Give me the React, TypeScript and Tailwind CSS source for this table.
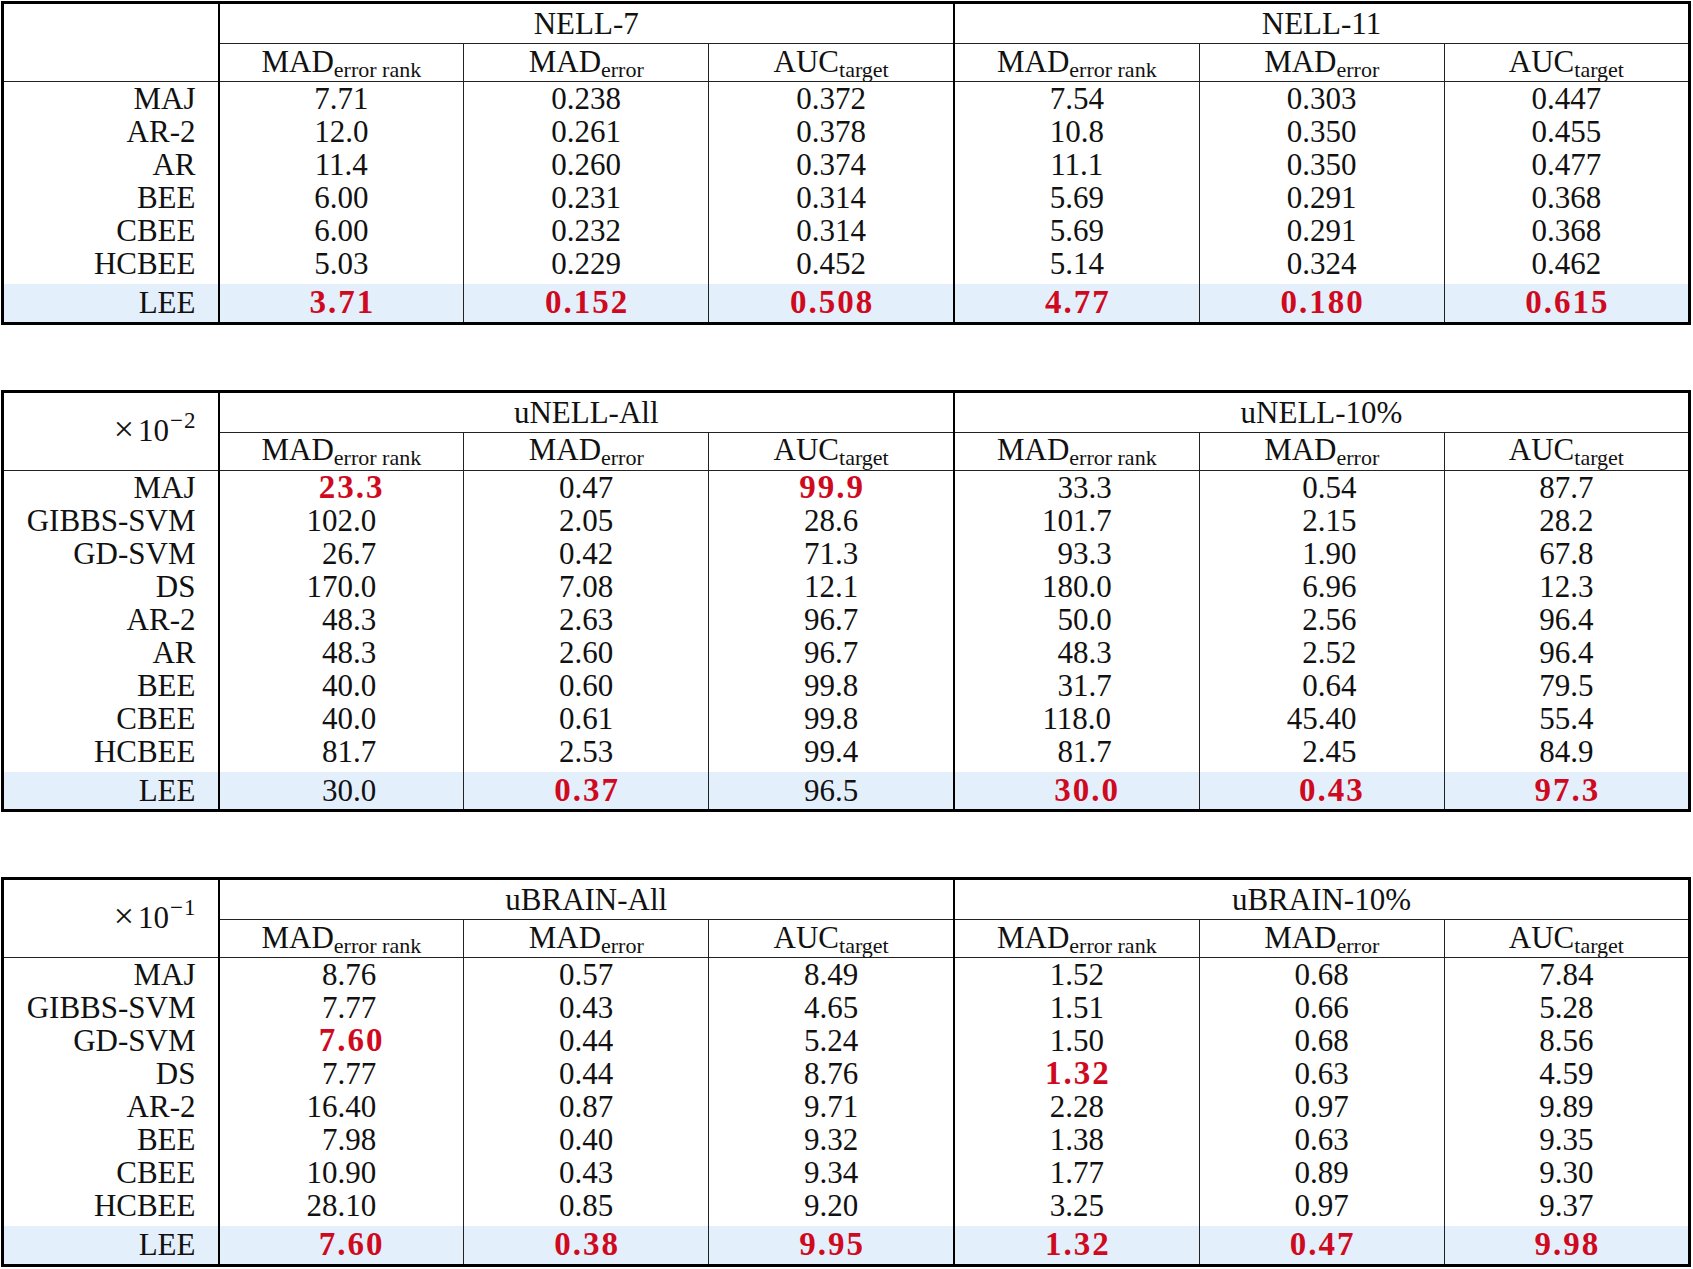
import React from 'react';

interface Block {
  scale?: string;
  groups: [string, string];
  rows: string[][];
}

// "*" marks a best value (bold red)
const blocks: Block[] = [
  {
    groups: ['NELL-7', 'NELL-11'],
    rows: [
      ['MAJ', '7.71', '0.238', '0.372', '7.54', '0.303', '0.447'],
      ['AR-2', '12.0', '0.261', '0.378', '10.8', '0.350', '0.455'],
      ['AR', '11.4', '0.260', '0.374', '11.1', '0.350', '0.477'],
      ['BEE', '6.00', '0.231', '0.314', '5.69', '0.291', '0.368'],
      ['CBEE', '6.00', '0.232', '0.314', '5.69', '0.291', '0.368'],
      ['HCBEE', '5.03', '0.229', '0.452', '5.14', '0.324', '0.462'],
      ['LEE', '*3.71', '*0.152', '*0.508', '*4.77', '*0.180', '*0.615'],
    ],
  },
  {
    scale: '2',
    groups: ['uNELL-All', 'uNELL-10%'],
    rows: [
      ['MAJ', '*23.3', '0.47', '*99.9', '33.3', '0.54', '87.7'],
      ['GIBBS-SVM', '102.0', '2.05', '28.6', '101.7', '2.15', '28.2'],
      ['GD-SVM', '26.7', '0.42', '71.3', '93.3', '1.90', '67.8'],
      ['DS', '170.0', '7.08', '12.1', '180.0', '6.96', '12.3'],
      ['AR-2', '48.3', '2.63', '96.7', '50.0', '2.56', '96.4'],
      ['AR', '48.3', '2.60', '96.7', '48.3', '2.52', '96.4'],
      ['BEE', '40.0', '0.60', '99.8', '31.7', '0.64', '79.5'],
      ['CBEE', '40.0', '0.61', '99.8', '118.0', '45.40', '55.4'],
      ['HCBEE', '81.7', '2.53', '99.4', '81.7', '2.45', '84.9'],
      ['LEE', '30.0', '*0.37', '96.5', '*30.0', '*0.43', '*97.3'],
    ],
  },
  {
    scale: '1',
    groups: ['uBRAIN-All', 'uBRAIN-10%'],
    rows: [
      ['MAJ', '8.76', '0.57', '8.49', '1.52', '0.68', '7.84'],
      ['GIBBS-SVM', '7.77', '0.43', '4.65', '1.51', '0.66', '5.28'],
      ['GD-SVM', '*7.60', '0.44', '5.24', '1.50', '0.68', '8.56'],
      ['DS', '7.77', '0.44', '8.76', '*1.32', '0.63', '4.59'],
      ['AR-2', '16.40', '0.87', '9.71', '2.28', '0.97', '9.89'],
      ['BEE', '7.98', '0.40', '9.32', '1.38', '0.63', '9.35'],
      ['CBEE', '10.90', '0.43', '9.34', '1.77', '0.89', '9.30'],
      ['HCBEE', '28.10', '0.85', '9.20', '3.25', '0.97', '9.37'],
      ['LEE', '*7.60', '*0.38', '*9.95', '*1.32', '*0.47', '*9.98'],
    ],
  },
];

const metrics: [string, string][] = [
  ['MAD', 'error rank'],
  ['MAD', 'error'],
  ['AUC', 'target'],
];

const digits = (s: string) => s.replace('*', '').replace('.', '').length;

function Metric({ base, sub }: { base: string; sub: string }) {
  return (
    <span className="whitespace-nowrap">
      {base}
      <span className="text-[22px] relative top-[5px]">{sub}</span>
    </span>
  );
}

function Value({ raw, width }: { raw: string; width: number }) {
  const bold = raw.startsWith('*');
  const v = raw.replace('*', '');
  // figure spaces keep numbers of a column flush right
  const pad = '\u2007'.repeat(Math.max(0, width - digits(raw)));
  return (
    <span className={bold ? 'font-bold text-[33px] tracking-[2px] pl-[2px] text-[#cf0a1f]' : ''}>
      {pad}
      {v}
    </span>
  );
}

function ResultTable({ block }: { block: Block }) {
  const body = block.rows.slice(0, -1);
  const lee = block.rows[block.rows.length - 1];
  const widths = [1, 2, 3, 4, 5, 6].map((c) => Math.max(...block.rows.map((r) => digits(r[c]))));
  const divider = (c: number) =>
    c === 2 ? 'border-r-2 border-r-black' : c === 5 ? '' : 'border-r border-r-[#222]';

  return (
    <table className="w-[1690px] table-fixed border-collapse border-[3px] border-black">
      <colgroup>
        <col className="w-[216px]" />
        <col />
        <col />
        <col />
        <col />
        <col />
        <col />
      </colgroup>
      <thead>
        <tr className="h-[41px]">
          <th
            rowSpan={2}
            className="border-r-2 border-r-black border-b border-b-[#222] align-middle text-right font-normal pr-[22px] pb-[2px]"
          >
            {block.scale && (
              <span className="whitespace-nowrap">
                <span className="text-[36px] leading-none mr-[4px]">×</span>10
                <span className="text-[23px] relative -top-[13px] ml-[1px]">
                  <span className="mr-[1px]">−</span>
                  {block.scale}
                </span>
              </span>
            )}
          </th>
          {block.groups.map((g, i) => (
            <th
              key={g}
              colSpan={3}
              className={`font-normal border-b border-b-[#222] ${i === 0 ? 'border-r-2 border-r-black' : ''}`}
            >
              {g}
            </th>
          ))}
        </tr>
        <tr className="h-[38px]">
          {[0, 1, 2, 3, 4, 5].map((c) => (
            <th key={c} className={`font-normal border-b border-b-[#222] ${divider(c)}`}>
              <Metric base={metrics[c % 3][0]} sub={metrics[c % 3][1]} />
            </th>
          ))}
        </tr>
      </thead>
      <tbody>
        {body.map((r, i) => (
          <tr key={r[0]} className={i === body.length - 1 ? 'h-[37px]' : 'h-[33px]'}>
            <td className={`text-right pr-[22px] border-r-2 border-r-black ${i === body.length - 1 ? 'pb-1' : ''}`}>
              {r[0]}
            </td>
            {[1, 2, 3, 4, 5, 6].map((c) => (
              <td
                key={c}
                className={`text-center ${divider(c - 1)} ${i === body.length - 1 ? 'pb-1' : ''}`}
              >
                <Value raw={r[c]} width={widths[c - 1]} />
              </td>
            ))}
          </tr>
        ))}
        <tr className="h-[39px] bg-[#e3effb]">
          <td className="text-right pr-[22px] border-r-2 border-r-black">{lee[0]}</td>
          {[1, 2, 3, 4, 5, 6].map((c) => (
            <td key={c} className={`text-center ${divider(c - 1)}`}>
              <Value raw={lee[c]} width={widths[c - 1]} />
            </td>
          ))}
        </tr>
      </tbody>
    </table>
  );
}

export default function App() {
  return (
    <div className="min-h-screen bg-white pt-px pl-px font-['Liberation_Serif',serif] text-[31px] leading-[33px] text-[#111]">
      <div className="flex flex-col gap-[65px]">
        {blocks.map((b) => (
          <ResultTable key={b.groups[0]} block={b} />
        ))}
      </div>
    </div>
  );
}
